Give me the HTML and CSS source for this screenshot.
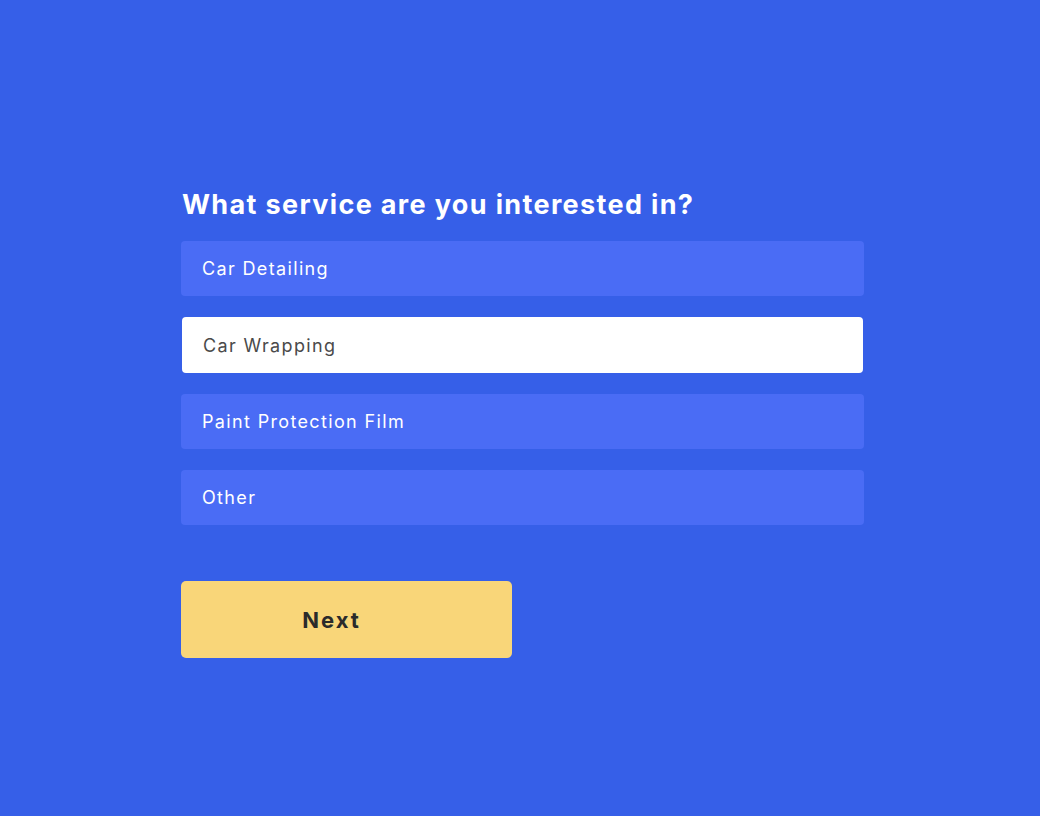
FILE: index.html
```html
<!DOCTYPE html>
<html>
<head>
    <meta name="viewport" content="width=device-width, initial-scale=1.0">
    <title>Service Form</title>
    <link rel="stylesheet" href="styles.css">
</head>
<body>
    <div class="form-container">
        <h1>What service are you interested in?</h1>

        <div class="options">
            <div class="option">Car Detailing</div>
            <div class="option selected">Car Wrapping</div>
            <div class="option">Paint Protection Film</div>
            <div class="option">Other</div>
        </div>

        <button class="next-btn">Next</button>
    </div>
</body>
</html>
```

FILE: styles.css
```css
* {
    box-sizing: border-box;
    margin: 0;
    padding: 0;
}

body {
    font-family: Inter, "Open Sans", sans-serif;
    background-color: #365fe8;
    min-height: 816px;
}

.form-container {
    width: 683px;
    margin-left: 181px;
    padding-top: 187px;
}

h1 {
    font-size: 27px;
    font-weight: 700;
    letter-spacing: 1.35px;
    color: #fff;
    line-height: 36px;
    margin-bottom: 18px;
    margin-left: 1px;
}

.options {
    display: flex;
    flex-direction: column;
    gap: 21px;
}

.option {
    height: 55px;
    display: flex;
    align-items: center;
    padding-left: 21px;
    background-color: #4a6cf5;
    border-radius: 4px;
    color: #fff;
    font-size: 18px;
    letter-spacing: 1.35px;
}

.option.selected {
    background-color: #fff;
    color: #4a4a4a;
    margin: 0 1px;
    height: 56px;
}

.next-btn {
    display: block;
    margin-top: 56px;
    width: 331px;
    height: 77px;
    padding-right: 30px;
    border: none;
    border-radius: 5px;
    background-color: #f9d679;
    color: #2b2b2b;
    font-family: inherit;
    font-size: 22px;
    font-weight: 700;
    letter-spacing: 2px;
    cursor: pointer;
}
```
